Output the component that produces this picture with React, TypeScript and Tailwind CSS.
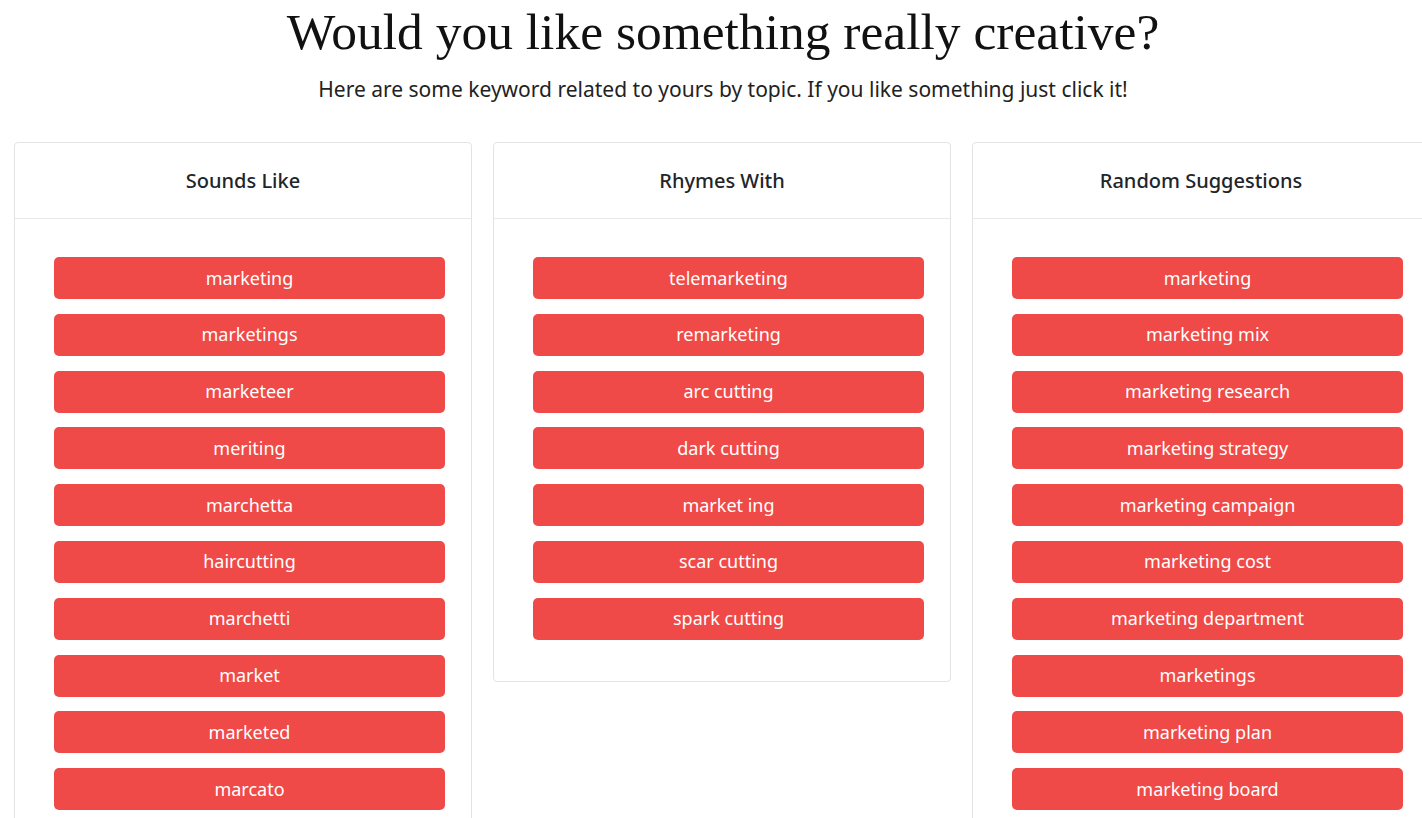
import React from 'react';

const COLUMNS: { title: string; words: string[] }[] = [
  {
    title: 'Sounds Like',
    words: ['marketing', 'marketings', 'marketeer', 'meriting', 'marchetta', 'haircutting', 'marchetti', 'market', 'marketed', 'marcato'],
  },
  {
    title: 'Rhymes With',
    words: ['telemarketing', 'remarketing', 'arc cutting', 'dark cutting', 'market ing', 'scar cutting', 'spark cutting'],
  },
  {
    title: 'Random Suggestions',
    words: [
      'marketing',
      'marketing mix',
      'marketing research',
      'marketing strategy',
      'marketing campaign',
      'marketing cost',
      'marketing department',
      'marketings',
      'marketing plan',
      'marketing board',
    ],
  },
];

const sans = "font-['Noto_Sans','Open_Sans',sans-serif]";

export default function App() {
  return (
    <div className="w-[1422px] h-[818px] overflow-hidden bg-white">
      {/* page is a bit wider than the window, the last card runs off the right edge */}
      <div className="w-[1446px]">
        <div className="text-center">
          <h1 className="pt-[4px] text-[51.5px] leading-[56px] text-[#111] font-['Liberation_Serif',serif]">
            Would you like something really creative?
          </h1>
          <p className={`mt-[16px] text-[21px] leading-[26px] text-[#222] ${sans}`}>
            Here are some keyword related to yours by topic. If you like something just click it!
          </p>
        </div>

        <div className="mt-[40px] flex items-start gap-[21px] px-[14px]">
          {COLUMNS.map(col => (
            <div key={col.title} className="w-[458px] shrink-0 rounded-[4px] border border-[#e3e3e3] bg-white">
              <div className={`h-[76px] border-b border-[#e8e8e8] flex items-center justify-center text-[20px] font-medium text-[#212529] ${sans}`}>
                {col.title}
              </div>
              <div className="p-[24px]">
                <ul className="mt-[14px] mb-[17px] pl-[15px] pr-[2px] flex flex-col gap-[14.8px]">
                  {col.words.map((w, i) => (
                    <li key={i}>
                      <button className={`w-full h-[42px] rounded-[5px] bg-[#ef4a47] text-white text-[18px] ${sans}`}>
                        {w}
                      </button>
                    </li>
                  ))}
                </ul>
              </div>
            </div>
          ))}
        </div>
      </div>
    </div>
  );
}
